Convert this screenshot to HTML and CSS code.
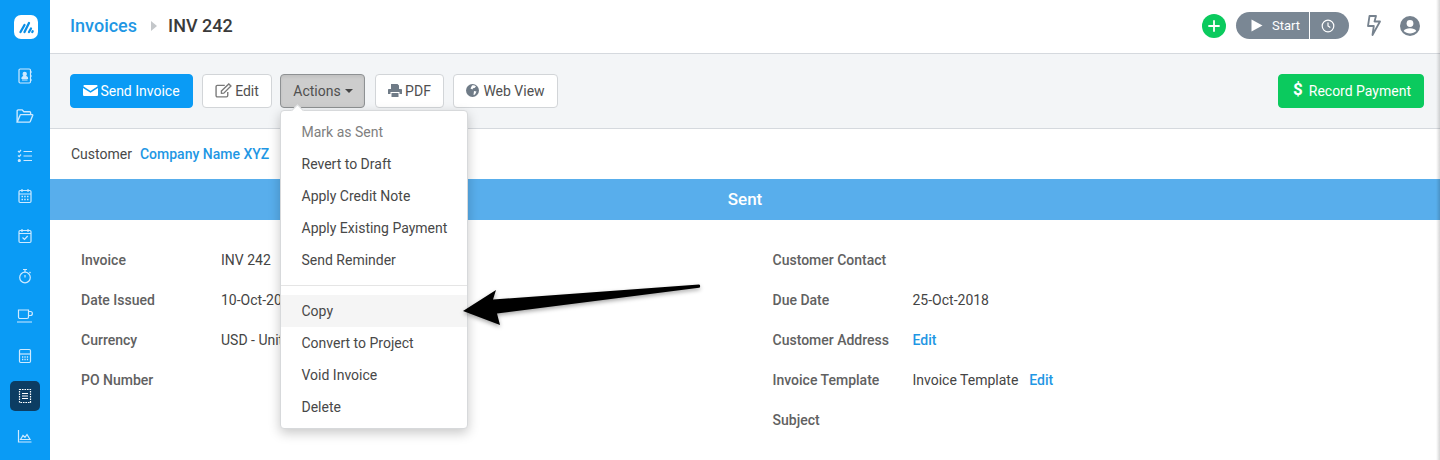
FILE: index.html
```html
<!DOCTYPE html>
<html lang="en">
<head>
<meta charset="utf-8">
<title>INV 242</title>
<link rel="stylesheet" href="styles.css">
</head>
<body>
<div class="app">
  <nav class="sidebar">
    <div class="logo">
      <svg width="24" height="24" viewBox="0 0 24 24"><rect width="24" height="24" rx="7" fill="#fff"/><path d="M6.500 17 10.500 10M10.500 17 15 8M15 17 17 13.500M18.300 17l.4-.7" fill="none" stroke="#0a8fe6" stroke-width="2.300" stroke-linecap="round"/></svg>
    </div>
    <a class="nav"><svg class="ni" viewBox="0 0 16 16"><rect x="2" y="1" width="11.500" height="14" rx="1.200"/><path d="M13.500 4h1.500M13.500 8h1.500M13.500 12h1.500M5 12h5.500"/><circle cx="7.700" cy="6" r="1.600" fill="currentColor"/><path d="M5 10.500c0-2.800 5.500-2.800 5.500 0z" fill="currentColor"/></svg></a>
    <a class="nav"><svg class="ni ni-w" viewBox="0 0 16 14"><path d="M1 12V2.500C1 2 1.400 1.500 2 1.500h3.500L7 3.200h5.200c.5 0 .8.400.8.800v1.800"/><path d="M1 12.500l2.600-6.200c.1-.3.400-.5.700-.5h10.200c.3 0 .5.300.4.600L12.600 12c-.1.300-.4.500-.7.500z"/></svg></a>
    <a class="nav"><svg class="ni" viewBox="0 0 16 16"><path d="M6.500 3.500H15M6.500 8H15M6.500 12.500H15M1 3l1.200 1.200L4 2M1 7.500l1.200 1.200L4 6.500"/><circle cx="2.300" cy="12.500" r="1" fill="currentColor"/></svg></a>
    <a class="nav"><svg class="ni" viewBox="0 0 16 16"><rect x="2" y="2.500" width="12" height="12" rx="1.200"/><path d="M2 6h12M5 1v3M11 1v3"/><path d="M4.500 8.500h1.500M7.200 8.500h1.500M10 8.500h1.500M4.500 11.500h1.500M7.200 11.500h1.500M10 11.500h1.500" stroke-width="1.500"/></svg></a>
    <a class="nav"><svg class="ni" viewBox="0 0 16 16"><rect x="2" y="2.500" width="12" height="12" rx="1.200"/><path d="M2 5.500h12M5 1v3M11 1v3M5.500 9.500l2 2 3.200-3.500"/></svg></a>
    <a class="nav"><svg class="ni" viewBox="0 0 16 16"><circle cx="8" cy="9.500" r="5.300"/><path d="M6 1.500h4M8 1.500v2.500M8 7v2.500M12.500 4l1 1"/></svg></a>
    <a class="nav"><svg class="ni ni-w" viewBox="0 0 18 16"><path d="M2.500 2h10v7c0 .8-.7 1.500-1.500 1.500H4c-.8 0-1.500-.7-1.500-1.500zM12.500 3.500h2c2.500 0 2.500 4 0 4h-2M1 14h15"/></svg></a>
    <a class="nav"><svg class="ni" viewBox="0 0 16 16"><rect x="2.500" y="1.500" width="11" height="13" rx="1.200"/><path d="M2.500 6h11"/><path d="M5 9h1.300M7.400 9h1.300M9.800 9h1.300M5 11.500h1.300M7.400 11.500h1.300M9.800 11.500h1.300" stroke-width="1.500"/></svg></a>
    <a class="nav nav-active"><svg class="ni" viewBox="0 0 16 16"><path d="M2.500 1.500h11v13h-11z" stroke-dasharray="1.600 .9"/><path d="M5 5.500h6M5 8h6M5 10.500h6"/></svg></a>
    <a class="nav"><svg class="ni" viewBox="0 0 16 16"><path d="M1.500 2v12h13M3.500 11.500l2.500-4 2 1.800 2-2.800 3 5z"/></svg></a>
  </nav>

  <div class="main">
    <header class="topbar">
      <div class="crumbs">
        <a class="crumb-link">Invoices</a>
        <span class="crumb-sep"></span>
        <span class="crumb-current">INV 242</span>
      </div>
      <div class="top-actions">
        <span class="plus"><svg width="12" height="12" viewBox="0 0 12 12"><path d="M6 1v10M1 6h10" stroke="#fff" stroke-width="1.800" stroke-linecap="round"/></svg></span>
        <div class="timer">
          <span class="timer-start"><svg width="12" height="13" viewBox="0 0 12 13"><path d="M.5.500 11.500 6.500.5 12.500z" fill="#fff"/></svg><span>Start</span></span>
          <span class="timer-clock"><svg width="14" height="14" viewBox="0 0 14 14" fill="none" stroke="#fff" stroke-width="1.200"><circle cx="7" cy="7" r="5.800"/><path d="M7 3.500V7l2.300 1.500"/></svg></span>
        </div>
        <svg class="bolt" width="14" height="21" viewBox="0 0 14 21" fill="none" stroke="#76828e" stroke-width="1.800" stroke-linejoin="round"><path d="M2.500 1h6.500L7.500 6.500h5.500L5.500 20 6.800 11H1z"/></svg>
        <svg class="avatar" width="20" height="20" viewBox="0 0 20 20"><circle cx="10" cy="10" r="10" fill="#76828e"/><circle cx="10" cy="7.500" r="3.400" fill="#fff"/><path d="M3.700 15c1.500-3.600 11.100-3.600 12.600 0-3.300 3.200-9.300 3.200-12.600 0z" fill="#fff"/></svg>
      </div>
    </header>

    <div class="toolbar">
      <div class="btn-group">
        <button class="btn btn-primary"><svg width="15" height="11" viewBox="0 0 15 11"><path d="M.3 1.300C.3.600.9 0 1.600 0h11.800c.7 0 1.300.6 1.300 1.300L7.500 6z" fill="#fff"/><path d="M0 3v6.700C0 10.400.6 11 1.300 11h12.400c.7 0 1.300-.6 1.300-1.300V3L7.500 7.800z" fill="#fff"/></svg>Send Invoice</button>
        <button class="btn btn-edit"><svg width="17" height="15" viewBox="0 0 16 14" fill="none" stroke="#7a7a7a" stroke-width="1.300"><path d="M12 8.500v3.300c0 .7-.5 1.200-1.200 1.200H2.200C1.500 13 1 12.500 1 11.800V3.400c0-.7.500-1.200 1.200-1.200h7"/><path d="M6 7.500l.1 2.200 2.200-.2L15 2.800 13 .8z"/></svg>Edit</button>
        <button class="btn btn-actions">Actions<span class="caret"></span></button>
        <button class="btn btn-pdf"><svg width="14" height="13" viewBox="0 0 14 13"><path d="M3 0h6.500L11 1.500V5H3zM0 6c0-.6.400-1 1-1h12c.6 0 1 .4 1 1v4h-2.500V8h-9v2H0zM3.500 9h7v4h-7z" fill="#6f7b87"/></svg>PDF</button>
        <button class="btn btn-web"><svg width="13" height="13" viewBox="0 0 13 13"><circle cx="6.500" cy="6.500" r="6.500" fill="#6f7b87"/><path d="M6 1.500c1.500-.5 3 0 4 1l-1.500 1.500-1.500.2-.5 1.300-2-1zM8 7l2.500.5L9 10.500 7.500 11z" fill="#fff"/></svg>Web View</button>
      </div>
      <button class="btn btn-success"><span class="dollar">$</span>Record Payment</button>
    </div>

    <div class="customer-row">
      <span class="customer-label">Customer</span>
      <a class="customer-name">Company Name XYZ</a>
    </div>

    <div class="status">Sent</div>

    <section class="details">
      <div class="col">
        <div class="row"><span class="label">Invoice</span><span class="value">INV 242</span></div>
        <div class="row"><span class="label">Date Issued</span><span class="value">10-Oct-2018</span></div>
        <div class="row"><span class="label">Currency</span><span class="value">USD - United States Dollar</span></div>
        <div class="row"><span class="label">PO Number</span></div>
      </div>
      <div class="col">
        <div class="row"><span class="label">Customer Contact</span></div>
        <div class="row"><span class="label">Due Date</span><span class="value">25-Oct-2018</span></div>
        <div class="row"><span class="label">Customer Address</span><a class="edit-link">Edit</a></div>
        <div class="row"><span class="label">Invoice Template</span><span class="value">Invoice Template</span><a class="edit-link edit-gap">Edit</a></div>
        <div class="row"><span class="label">Subject</span></div>
      </div>
    </section>
  </div>

  <ul class="menu">
    <li class="item item-disabled">Mark as Sent</li>
    <li class="item">Revert to Draft</li>
    <li class="item">Apply Credit Note</li>
    <li class="item">Apply Existing Payment</li>
    <li class="item">Send Reminder</li>
    <li class="divider"></li>
    <li class="item item-hover">Copy</li>
    <li class="item">Convert to Project</li>
    <li class="item">Void Invoice</li>
    <li class="item">Delete</li>
  </ul>

  <svg class="arrow" width="260" height="60" viewBox="0 0 260 60"><path d="M13 36 46 15 43 24.500 249 9.500c1.500.3 1.500 3 0 3.300L47 38.500l3 11.500z" fill="#000"/></svg>
</div>
</body>
</html>
```

FILE: styles.css
```css
* { box-sizing: border-box; }
html, body { margin: 0; padding: 0; height: 460px; overflow: hidden; background: #fff; }
body { font-family: Roboto, "Liberation Sans", sans-serif; font-size: 14px; color: #444; }
ul { list-style: none; margin: 0; padding: 0; }

.app { position: relative; display: flex; width: 1440px; height: 460px; overflow: hidden; }
.app::after { content: ""; position: absolute; right: 0; top: 0; bottom: 0; width: 4px; background: linear-gradient(to right, rgba(0,0,0,0), rgba(0,0,0,.16)); }

.sidebar { width: 50px; flex: none; background: #0a9bf5; display: flex; flex-direction: column; align-items: center; }
.logo { height: 56px; flex: none; padding: 15px 0 0 1px; display: flex; justify-content: center; }
.logo svg { display: block; }
.nav { width: 30px; height: 30px; margin: 5px 0; flex: none; display: flex; align-items: center; justify-content: center; color: #cfeaff; border-radius: 5px; }
.nav-active { background: #0c3d63; color: #fff; }
.ni { width: 16px; height: 16px; fill: none; stroke: currentColor; stroke-width: 1.200; }
.ni-w { width: 18px; }

.main { flex: 1; min-width: 0; display: flex; flex-direction: column; }

.topbar { height: 54px; flex: none; display: flex; align-items: center; justify-content: space-between; padding: 0 20px 2px 20px; border-bottom: 1px solid #d5d9de; }
.crumbs { display: flex; align-items: center; }
.crumb-link { font-size: 18px; font-weight: 500; color: #1f97e4; }
.crumb-sep { width: 0; height: 0; margin: 0 11px 0 14px; border-left: 6px solid #c4c7ca; border-top: 5px solid transparent; border-bottom: 5px solid transparent; }
.crumb-current { font-size: 18px; font-weight: 500; color: #3a3a3a; }
.top-actions { display: flex; align-items: center; }
.plus { width: 24px; height: 24px; border-radius: 50%; background: #0bca5e; display: flex; align-items: center; justify-content: center; margin-right: 10px; }
.timer { display: flex; height: 27px; border-radius: 14px; background: #7a8794; color: #fff; overflow: hidden; margin-right: 18px; }
.timer-start { width: 74px; display: flex; align-items: center; gap: 9px; padding-left: 15px; border-right: 1px solid #fff; font-size: 13px; }
.timer-clock { width: 39px; display: flex; align-items: center; justify-content: center; padding-right: 3px; }
.bolt { margin-right: 19px; }
.avatar { display: block; }

.toolbar { height: 75px; flex: none; display: flex; align-items: center; justify-content: space-between; padding: 0 16px 1px 20px; background: #f3f5f7; border-bottom: 1px solid #d5d9de; }
.btn-group { display: flex; align-items: center; }
.btn { height: 34px; display: inline-flex; align-items: center; justify-content: center; gap: 4px; font-family: inherit; font-size: 14px; color: #505050; background: #fff; border: 1px solid #d2d5d8; border-radius: 4px; padding: 0; white-space: nowrap; }
.btn-primary { width: 123px; background: #0a9bf5; border-color: #0a9bf5; color: #fff; gap: 2px; margin-right: 9px; }
.btn-edit { width: 70px; gap: 3px; margin-right: 8px; }
.btn-actions { width: 85px; padding-left: 1px; background: #cdcdcd; border-color: #8e9193; margin-right: 10px; box-shadow: inset 0 2px 3px rgba(0,0,0,.06); }
.btn-pdf { width: 69px; gap: 3px; margin-right: 9px; }
.btn-web { width: 105px; }
.btn-success { width: 146px; background: #0bca5e; border-color: #0bca5e; color: #fff; gap: 6px; padding-left: 2px; }
.dollar { font-size: 17px; font-weight: 700; line-height: 1; margin-top: -2px; }
.caret { width: 0; height: 0; border-top: 4px solid #444; border-left: 4px solid transparent; border-right: 4px solid transparent; }

.customer-row { height: 50px; flex: none; display: flex; align-items: center; padding: 0 21px; }
.customer-label { margin-right: 8px; color: #484848; }
.customer-name { font-weight: 500; color: #1f97e4; }

.status { height: 41px; flex: none; display: flex; align-items: center; justify-content: center; padding-bottom: 1px; background: #58aeec; color: #fff; font-size: 17px; font-weight: 500; }

.details { display: grid; grid-template-columns: 691.500px 1fr; padding: 20px 31px 0; }
.col { display: flex; flex-direction: column; }
.row { height: 40px; flex: none; display: flex; align-items: center; white-space: nowrap; }
.label { width: 140px; flex: none; font-weight: 500; color: #616161; }
.value { color: #444; }
.edit-link { font-weight: 500; color: #1f97e4; }
.edit-gap { margin-left: 11px; }

.menu { position: absolute; left: 280px; top: 110px; width: 188px; height: 319px; padding: 5px 0; background: #fff; border: 1px solid #d7d9db; border-radius: 4px; box-shadow: 0 4px 12px rgba(0,0,0,.22); z-index: 2; }
.menu::before { content: ""; position: absolute; left: 12px; top: -5px; width: 8px; height: 8px; background: #fff; border-left: 1px solid #d7d9db; border-top: 1px solid #d7d9db; transform: rotate(45deg); }
.item { height: 32px; display: flex; align-items: center; padding-left: 20.500px; color: #484848; white-space: nowrap; }
.item-disabled { color: #808080; }
.item-hover { background: #f5f5f5; }
.divider { height: 1px; margin: 9px 0; background: #e5e5e5; }

.arrow { position: absolute; left: 450px; top: 275px; z-index: 3; filter: drop-shadow(0 2px 2px rgba(0,0,0,.35)); }
```
